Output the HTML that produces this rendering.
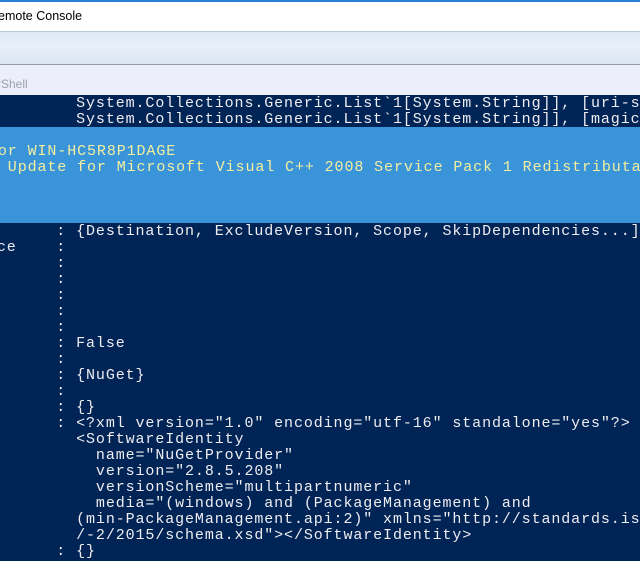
<!DOCTYPE html>
<html><head><style>
body{margin:0;width:640px;height:561px;overflow:hidden;position:relative;background:#fff;font-family:"Liberation Sans",sans-serif}
.top{position:absolute;left:0;top:0;width:640px;height:2px;background:#2b7fd4}
.title{position:absolute;left:0;top:2px;width:640px;height:29px;background:#fff;font-size:12.5px;line-height:29px;color:#000;text-indent:-2px}
.tool{position:absolute;left:0;top:31px;width:640px;height:32px;background:linear-gradient(#dde8f5,#e9f0f9 45%,#d9e5f3);border-top:1px solid #b7c9e0;border-bottom:1px solid #8e9aab}
.tab{position:absolute;left:0;top:65px;width:640px;height:30px;background:#eceff9;font-size:12px;line-height:38px;color:#9aa0aa;text-indent:-3px}
.con{position:absolute;left:0;top:95px;width:640px;height:466px;background:#012456}
.band{position:absolute;left:0;top:127px;width:640px;height:96px;background:#3a94da}
pre{position:absolute;margin:0;font-family:"Liberation Mono",monospace;font-size:15px;letter-spacing:0.9px;line-height:16px;color:#eeedf0;white-space:pre}
.y{color:#f3eea0}
</style></head><body>
<div class="top"></div>
<div class="title">emote Console</div>
<div class="tool"></div>
<div class="tab">rShell</div>
<div class="con"></div>
<div class="band"></div>
<pre style="left:-13px;top:96px">         System.Collections.Generic.List`1[System.String]], [uri-s
         System.Collections.Generic.List`1[System.String]], [magic</pre>
<pre class="y" style="left:-12px;top:144px">For WIN-HC5R8P1DAGE
y Update for Microsoft Visual C++ 2008 Service Pack 1 Redistributable</pre>
<pre style="left:-13px;top:224px">       : {Destination, ExcludeVersion, Scope, SkipDependencies...]
nce    :
       :
       :
       :
       :
       :
       : False
       :
       : {NuGet}
       :
       : {}
       : &lt;?xml version="1.0" encoding="utf-16" standalone="yes"?&gt;
         &lt;SoftwareIdentity
           name="NuGetProvider"
           version="2.8.5.208"
           versionScheme="multipartnumeric"
           media="(windows) and (PackageManagement) and
         (min-PackageManagement.api:2)" xmlns="http://standards.iso
         /-2/2015/schema.xsd"&gt;&lt;/SoftwareIdentity&gt;
       : {}</pre>
</body></html>
